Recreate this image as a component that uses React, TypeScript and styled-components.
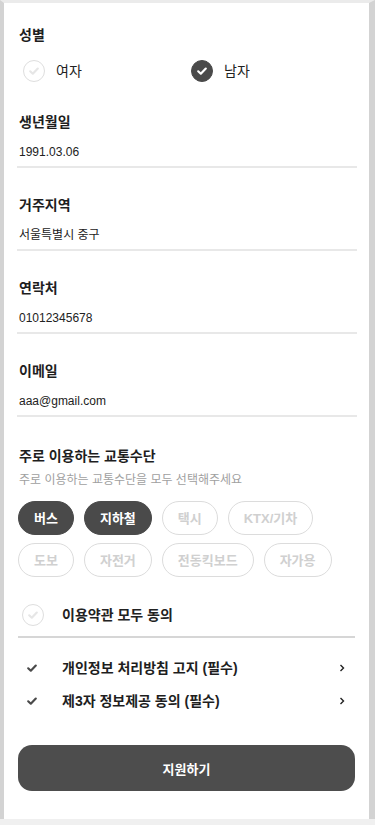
import React, { useState } from 'react';
import styled, { createGlobalStyle } from 'styled-components';

const GlobalStyle = createGlobalStyle`
  html, body {
    margin: 0;
    padding: 0;
    background: #f0f0f0;
    font-family: "Liberation Sans", "Noto Sans CJK KR", sans-serif;
    color: #222;
  }
  * { box-sizing: border-box; }
`;

const Frame = styled.div`
  width: 375px;
  height: 819px;
  border-left: 4px solid #d3d3d3;
  border-right: 6px solid #d3d3d3;
  border-top: 3px solid #ebebeb;
  background: #fff;
  overflow: hidden;
`;

const Form = styled.div`
  padding: 22px 12px 0 13px;
  display: flex;
  flex-direction: column;
`;

const Section = styled.div<{ $gap?: number }>`
  display: flex;
  flex-direction: column;
  margin-bottom: ${(p) => p.$gap ?? 32}px;
`;

const Label = styled.div`
  font-size: 14px;
  font-weight: 700;
  line-height: 20px;
  padding-left: 2px;
  color: #1e1e1e;
`;

const Sub = styled.div`
  margin-top: 6px;
  font-size: 12px;
  line-height: 16px;
  padding-left: 2px;
  color: #a0a0a0;
`;

const Value = styled.div`
  margin-top: 12px;
  font-size: 12px;
  line-height: 16px;
  padding: 0 2px 6px;
  border-bottom: 2px solid #e8e8e8;
  color: #222;
`;

const RadioRow = styled.div`
  display: grid;
  grid-template-columns: 168px 1fr;
  margin-top: 15px;
  padding-left: 6px;
`;

const RadioItem = styled.div`
  display: flex;
  align-items: center;
  gap: 11px;
  font-size: 14px;
  line-height: 22px;
`;

const Circle = styled.span<{ $on?: boolean }>`
  width: 22px;
  height: 22px;
  border-radius: 50%;
  display: inline-flex;
  align-items: center;
  justify-content: center;
  flex-shrink: 0;
  background: ${(p) => (p.$on ? '#4a4a4a' : '#fff')};
  border: 1px solid ${(p) => (p.$on ? '#4a4a4a' : '#dedede')};
`;

const Chips = styled.div`
  display: flex;
  flex-wrap: wrap;
  gap: 8px 10px;
  margin-top: 13px;
  padding-left: 1px;
  width: 330px;
`;

const Chip = styled.button<{ $on?: boolean }>`
  height: 34px;
  padding: 0 15px;
  min-width: 55px;
  border-radius: 17px;
  font-family: inherit;
  font-size: 13px;
  font-weight: 700;
  line-height: 1;
  border: 1px solid ${(p) => (p.$on ? '#4a4a4a' : '#dcdcdc')};
  background: ${(p) => (p.$on ? '#4a4a4a' : '#fff')};
  color: ${(p) => (p.$on ? '#fff' : '#d0d0d0')};
  cursor: pointer;
`;

const AgreeAll = styled.div`
  display: flex;
  align-items: center;
  gap: 18px;
  padding: 0 0 10px 4px;
  font-size: 14px;
  font-weight: 700;
  line-height: 22px;
  border-bottom: 2px solid #d6d6d6;
  margin-left: 1px;
  margin-right: 2px;
`;

const TermList = styled.ul`
  list-style: none;
  margin: 20px 0 0;
  padding: 0 0 0 9px;
  display: flex;
  flex-direction: column;
  gap: 13px;
`;

const Term = styled.li`
  display: flex;
  align-items: center;
  font-size: 14px;
  font-weight: 700;
  line-height: 20px;
  color: #1e1e1e;
`;

const TermText = styled.span`
  flex: 1;
  margin-left: 24px;
`;

const Chevron = styled.span`
  width: 14px;
  display: inline-flex;
  justify-content: center;
  margin-right: 8px;
`;

const Submit = styled.button`
  margin: 34px 2px 0 1px;
  height: 46px;
  border: none;
  border-radius: 14px;
  background: #4d4d4d;
  color: #fff;
  font-family: inherit;
  font-size: 13px;
  font-weight: 700;
  cursor: pointer;
`;

const Check = ({ color, size = 12 }: { color: string; size?: number }) => (
  <svg width={size} height={size} viewBox="0 0 12 12">
    <path d="M2.2 6.3 L4.8 8.7 L9.8 3.6" fill="none" stroke={color} strokeWidth="2.2" strokeLinecap="round" strokeLinejoin="round" />
  </svg>
);

const Arrow = () => (
  <svg width="6" height="8" viewBox="0 0 6 8">
    <path d="M1.5 1 L4.5 4 L1.5 7" fill="none" stroke="#222" strokeWidth="1.4" />
  </svg>
);

const transports = ['버스', '지하철', '택시', 'KTX/기차', '도보', '자전거', '전동킥보드', '자가용'];

const fields = [
  { label: '생년월일', value: '1991.03.06' },
  { label: '거주지역', value: '서울특별시 중구' },
  { label: '연락처', value: '01012345678' },
  { label: '이메일', value: 'aaa@gmail.com' },
];

export default function App() {
  const [gender, setGender] = useState('male');
  const [picked, setPicked] = useState<string[]>(['버스', '지하철']);

  const toggle = (t: string) =>
    setPicked((prev) => (prev.includes(t) ? prev.filter((x) => x !== t) : [...prev, t]));

  return (
    <>
      <GlobalStyle />
      <Frame>
        <Form>
          <Section $gap={30}>
            <Label>성별</Label>
            <RadioRow>
              <RadioItem onClick={() => setGender('female')}>
                <Circle $on={gender === 'female'}>
                  <Check color={gender === 'female' ? '#fff' : '#e6e6e6'} />
                </Circle>
                여자
              </RadioItem>
              <RadioItem onClick={() => setGender('male')}>
                <Circle $on={gender === 'male'}>
                  <Check color={gender === 'male' ? '#fff' : '#e6e6e6'} />
                </Circle>
                남자
              </RadioItem>
            </RadioRow>
          </Section>

          {fields.map((f, i) => (
            <Section key={f.label} $gap={i === fields.length - 1 ? 29 : 27}>
              <Label>{f.label}</Label>
              <Value>{f.value}</Value>
            </Section>
          ))}

          <Section $gap={27}>
            <Label>주로 이용하는 교통수단</Label>
            <Sub>주로 이용하는 교통수단을 모두 선택해주세요</Sub>
            <Chips>
              {transports.map((t) => (
                <Chip key={t} $on={picked.includes(t)} onClick={() => toggle(t)}>
                  {t}
                </Chip>
              ))}
            </Chips>
          </Section>

          <AgreeAll>
            <Circle>
              <Check color="#e6e6e6" />
            </Circle>
            이용약관 모두 동의
          </AgreeAll>
          <TermList>
            <Term>
              <Check color="#4a4a4a" size={12} />
              <TermText>개인정보 처리방침 고지 (필수)</TermText>
              <Chevron><Arrow /></Chevron>
            </Term>
            <Term>
              <Check color="#4a4a4a" size={12} />
              <TermText>제3자 정보제공 동의 (필수)</TermText>
              <Chevron><Arrow /></Chevron>
            </Term>
          </TermList>

          <Submit>지원하기</Submit>
        </Form>
      </Frame>
    </>
  );
}
